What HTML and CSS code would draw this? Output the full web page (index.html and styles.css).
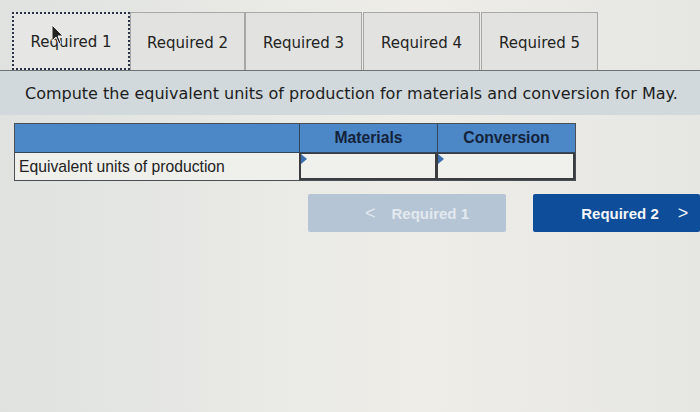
FILE: index.html
```html
<!DOCTYPE html>
<html>
<head>
<meta charset="utf-8">
<link rel="stylesheet" href="styles.css">
</head>
<body>
<div class="page">
  <div class="tabs">
    <div class="tab tab-active">Required 1</div>
    <div class="tab tab-2">Required 2</div>
    <div class="tab tab-3">Required 3</div>
    <div class="tab tab-4">Required 4</div>
    <div class="tab tab-5">Required 5</div>
  </div>
  <div class="band">Compute the equivalent units of production for materials and conversion for May.</div>
  <div class="table">
    <div class="row head">
      <div class="cell c-label"></div>
      <div class="cell c-num">Materials</div>
      <div class="cell c-num">Conversion</div>
    </div>
    <div class="row body">
      <div class="cell c-label">Equivalent units of production</div>
      <div class="cell c-num input"><span class="flag"></span></div>
      <div class="cell c-num input"><span class="flag"></span></div>
    </div>
  </div>
  <div class="nav">
    <div class="btn btn-prev"><span class="chev">&lt;</span><span>Required 1</span></div>
    <div class="btn btn-next"><span>Required 2</span><span class="chev">&gt;</span></div>
  </div>
  <svg class="cursor" width="14" height="22" viewBox="0 0 14 22"><path d="M1 1 L1 17 L5 13 L8 20 L10 19 L7 12 L12 12 Z" fill="#222" stroke="#eee" stroke-width="1"/></svg>
</div>
</body>
</html>
```
FILE: styles.css
```css
html, body { margin: 0; padding: 0; }
body {
  width: 700px; height: 412px; overflow: hidden;
  background: linear-gradient(90deg, #dfe2df 0%, #eaeae6 40%, #eeede8 60%, #e6e6e3 100%);
  font-family: "DejaVu Sans", Verdana, sans-serif;
  color: #1e1e1e;
}
.page { position: relative; height: 412px; }
.tabs {
  display: flex;
  padding: 12px 0 0 12px;
  border-bottom: 1px solid #6f7273;
}
.tab {
  box-sizing: border-box;
  height: 58px;
  width: 117px;
  display: flex; align-items: center; justify-content: center;
  font-size: 15px;
  padding-top: 2px;
  background: #e2e3e1;
  border: 1px solid #a7a8a6;
  border-bottom: none;
  color: #222;
}
.tab-active {
  width: 118px;
  border: 2px dotted #2a3448;
  background: #e6e7e4;
}
.tab-2 { width: 115px; }
.tab-4 { margin-left: 1px; }
.tab-5 { margin-left: 1px; }
.band {
  height: 44px;
  background: #d1d9dc;
  padding-left: 25px;
  display: flex; align-items: center;
  font-size: 16px;
  color: #1d1d1d;
  box-sizing: border-box;
}
.table {
  margin: 8px 0 0 14px;
  width: 562px;
  box-sizing: border-box;
  font-family: "Liberation Sans", Arial, sans-serif;
  font-size: 15.7px;
  border: 1px solid #4a4f55;
}
.row { display: flex; }
.head { height: 28px; background: #4c87c7; border-bottom: 1px solid #34465c; }
.body { height: 27px; background: #efefec; }
.cell { box-sizing: border-box; display: flex; align-items: center; }
.c-label { width: 284px; padding-left: 4px; color: #222; }
.c-num { width: 138px; justify-content: center; font-weight: bold; color: #14233a; }
.head .c-num { border-left: 1px solid #34465c; }
.input { position: relative; border: 2px solid #3a3c40; border-top-width: 1px; background: #f0f0ed; }
.input + .input { border-left-width: 1px; }
.flag {
  position: absolute; left: 0; top: 0;
  width: 0; height: 0;
  border-top: 5px solid transparent;
  border-bottom: 5px solid transparent;
  border-left: 6px solid #3b6fb0;
}
.nav {
  display: flex;
  margin-top: 13px;
  padding-left: 308px;
  font-family: "Liberation Sans", Arial, sans-serif;
  font-size: 15px;
  font-weight: bold;
}
.btn {
  box-sizing: border-box;
  height: 38px;
  display: flex; align-items: center;
  border-radius: 2px;
}
.btn-prev {
  width: 202px;
  background: #b6c5d5;
  color: #e3e9ef;
  padding-left: 57px;
  gap: 16px;
}
.btn-next {
  width: 170px;
  margin-left: 27px;
  background: #0d4d99;
  color: #f4f6fa;
  padding-left: 48px;
  gap: 19px;
}
.chev { font-weight: normal; font-size: 18px; }
.cursor { position: absolute; left: 51px; top: 24px; }
```
